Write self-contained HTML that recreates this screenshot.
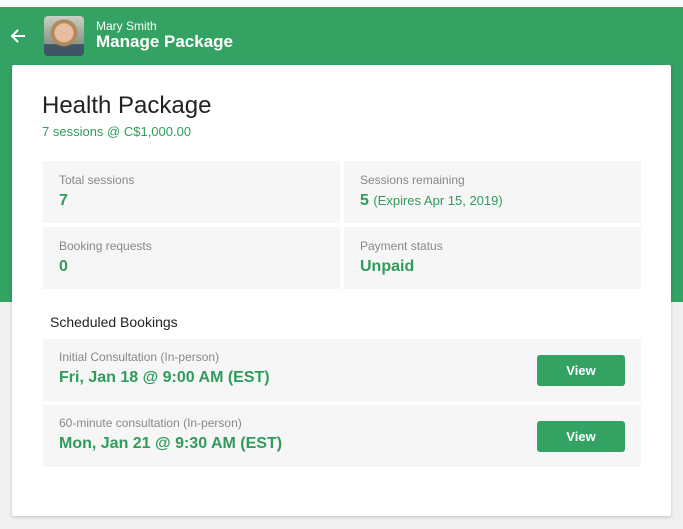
<!DOCTYPE html><html><head><style>
body{margin:0;width:683px;height:529px;background:#f0f0f0;font-family:"Liberation Sans",sans-serif;position:relative;overflow:hidden}
.g{position:absolute;left:0;top:7px;width:683px;height:295px;background:#33a263}
.w{position:absolute;left:0;top:0;width:683px;height:7px;background:#fff}
.card{position:absolute;left:12px;top:65px;width:659px;height:451px;background:#fff;border-radius:2px;box-shadow:0 1px 3px rgba(0,0,0,.2)}
.a{position:absolute}
.box{position:absolute;background:#f6f6f6}
.lab{position:absolute;left:16px;font-size:12px;color:#888}
.val{position:absolute;left:16px;font-size:16px;font-weight:bold;color:#2f9b5c}
.btn{position:absolute;left:494px;top:16px;width:88px;height:31px;background:#33a263;border-radius:3px;color:#fff;font-weight:bold;font-size:13px;text-align:center;line-height:31px}
</style></head><body>
<div class="w"></div><div class="g"></div>
<svg class="a" style="left:9px;top:27px" width="18" height="18" viewBox="0 0 18 18"><path d="M16 9H3M9 3L3 9l6 6" stroke="#fff" stroke-width="2" fill="none"/></svg>
<div class="a" style="left:44px;top:16px;width:40px;height:40px;border-radius:4px;background:radial-gradient(circle at 50% 42%,#e8bda0 0 9px,#b08a5e 10px 13px,transparent 14px),linear-gradient(#c9cfc3,#8a9488 70%,#3f5566 71%)"></div>
<div class="a" style="left:96px;top:19px;color:#fff;font-size:12px">Mary Smith</div>
<div class="a" style="left:96px;top:32px;color:#fff;font-size:17px;font-weight:bold">Manage Package</div>
<div class="card">
<div class="a" style="left:30px;top:27px;font-size:24px;color:#222">Health Package</div>
<div class="a" style="left:30px;top:59px;font-size:13px;color:#2f9b5c">7 sessions @ C$1,000.00</div>
<div class="box" style="left:31px;top:96px;width:297px;height:62px"><div class="lab" style="top:12px">Total sessions</div><div class="val" style="top:31px">7</div></div>
<div class="box" style="left:332px;top:96px;width:297px;height:62px"><div class="lab" style="top:12px">Sessions remaining</div><div class="val" style="top:31px">5 <span style="font-size:13px;font-weight:normal">(Expires Apr 15, 2019)</span></div></div>
<div class="box" style="left:31px;top:162px;width:297px;height:62px"><div class="lab" style="top:12px">Booking requests</div><div class="val" style="top:31px">0</div></div>
<div class="box" style="left:332px;top:162px;width:297px;height:62px"><div class="lab" style="top:12px">Payment status</div><div class="val" style="top:31px">Unpaid</div></div>
<div class="a" style="left:38px;top:249px;font-size:14px;color:#222">Scheduled Bookings</div>
<div class="box" style="left:31px;top:274px;width:598px;height:62px"><div class="lab" style="top:11px">Initial Consultation (In-person)</div><div class="val" style="top:30px">Fri, Jan 18 @ 9:00 AM (EST)</div><div class="btn">View</div></div>
<div class="box" style="left:31px;top:340px;width:598px;height:62px"><div class="lab" style="top:11px">60-minute consultation (In-person)</div><div class="val" style="top:30px">Mon, Jan 21 @ 9:30 AM (EST)</div><div class="btn">View</div></div>
</div>
</body></html>
